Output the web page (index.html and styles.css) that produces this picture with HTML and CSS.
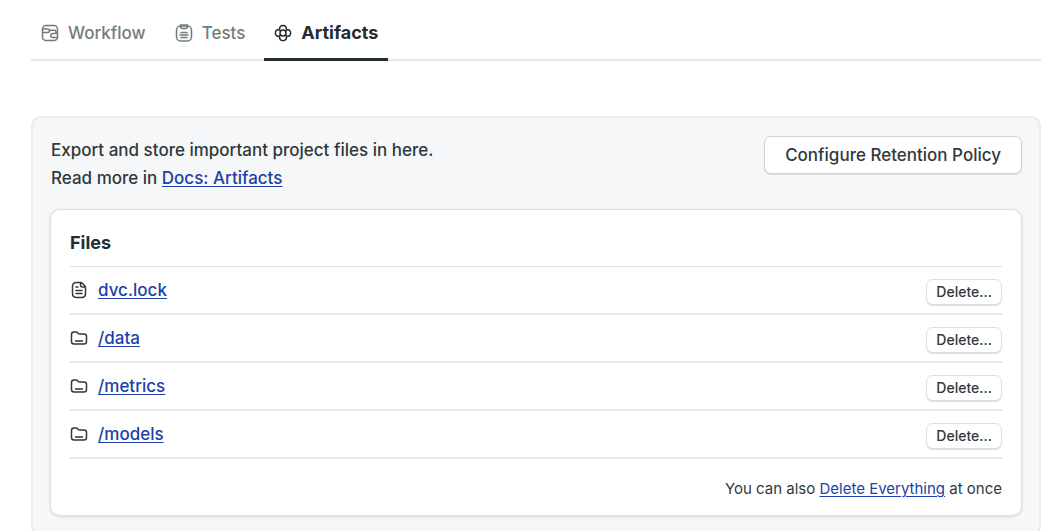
FILE: index.html
```html
<!DOCTYPE html>
<html lang="en">
<head>
<meta charset="utf-8">
<title>Artifacts</title>
<link rel="stylesheet" href="styles.css">
</head>
<body>
<svg class="sprite" aria-hidden="true">
  <symbol id="folder" viewBox="0 0 18 18"><path d="M1.500 12.500v-7q0-2.500 2.500-2.500h2c1.800 0 1.800 2 3.600 2H14q2.500 0 2.500 2.500v5q0 2.500-2.500 2.500H4q-2.500 0-2.500-2.500zM5.500 12h7"/></symbol>
  <symbol id="file" viewBox="0 0 18 18"><path d="M10.500 1.500H6.500Q2.500 1.500 2.500 5.500v7q0 4 4 4h5q4 0 4-4V6.500q0-1-1-2l-2-2q-1-1-2-1zM10.500 1.500v2.500q0 2 2 2h3M6 6h2M6 9.500h6M6 12.500h6"/></symbol>
</svg>
<nav class="tabs">
  <a class="tab" href="#workflow">
    <svg class="icon" viewBox="0 0 18 18" aria-hidden="true"><rect x="1.500" y="1.500" width="15" height="15" rx="3.500"/><path d="M1.500 5H6q2.500 0 2.500 1.800T6 8.600H1.500M8.500 6.300h5q1.500 0 1.500 1.500v1.500M16.500 9.500H12q-2.300 0-2.300 2t2.300 2h4.500"/></svg>
    <span>Workflow</span>
  </a>
  <a class="tab" href="#tests">
    <svg class="icon" viewBox="0 0 18 18" aria-hidden="true"><rect x="1.500" y="2" width="15" height="15" rx="4"/><path d="M5.500 1h7v1q0 2.500-2.500 2.500H8Q5.500 4.500 5.500 2zM6 8.500h6M5 11h8M6 13.500h6"/></svg>
    <span>Tests</span>
  </a>
  <a class="tab active" href="#artifacts" aria-current="page">
    <svg class="icon" viewBox="0 0 18 18" aria-hidden="true"><circle cx="9" cy="9" r="3"/><path d="M5.500 5.500C5.500 0 12.500 0 12.500 5.500C18 5.500 18 12.500 12.500 12.500C12.500 18 5.500 18 5.500 12.500C0 12.500 0 5.500 5.500 5.500zM5.500 5.500q0 1 1.200 1.500M12.500 5.500q0 1-1.200 1.500M12.500 12.500q0-1-1.200-1.500M5.500 12.500q0-1 1.200-1.500"/></svg>
    <span>Artifacts</span>
  </a>
</nav>
<main class="panel">
  <header class="intro">
    <p class="lead">Export and store important project files in here.<br>Read more in <a href="#docs">Docs: Artifacts</a></p>
    <button class="button" type="button">Configure Retention Policy</button>
  </header>
  <section class="card">
    <h2 class="title">Files</h2>
    <ul class="files">
      <li class="row"><svg class="icon" aria-hidden="true"><use href="#file"/></svg><a class="name" href="#lock">dvc.lock</a><button class="button small" type="button">Delete...</button></li>
      <li class="row"><svg class="icon" aria-hidden="true"><use href="#folder"/></svg><a class="name" href="#data">/data</a><button class="button small" type="button">Delete...</button></li>
      <li class="row"><svg class="icon" aria-hidden="true"><use href="#folder"/></svg><a class="name" href="#metrics">/metrics</a><button class="button small" type="button">Delete...</button></li>
      <li class="row"><svg class="icon" aria-hidden="true"><use href="#folder"/></svg><a class="name" href="#models">/models</a><button class="button small" type="button">Delete...</button></li>
    </ul>
    <p class="note">You can also <a href="#all">Delete Everything</a> at once</p>
  </section>
</main>
</body>
</html>
```
FILE: styles.css
```css
* { box-sizing: border-box; }
body {
  margin: 0;
  padding: 8px 15px 0 31px;
  background: #fff;
  color: #30393c;
  font-family: Inter, "Liberation Sans", sans-serif;
  font-size: 17px;
  font-weight: 500;
  line-height: 28px;
}
p, h2, ul { margin: 0; padding: 0; }
a { color: #213fa8; text-decoration-thickness: 1px; text-underline-offset: 2px; }
.sprite { display: none; }
.icon {
  width: 18px;
  height: 18px;
  flex: none;
  fill: none;
  stroke: currentColor;
  stroke-width: 1.5;
  stroke-linecap: round;
  stroke-linejoin: round;
}
.tabs {
  display: flex;
  gap: 9px;
  height: 53px;
  border-bottom: 2px solid #e4e8eb;
}
.tab {
  display: flex;
  align-items: center;
  gap: 9px;
  height: 53px;
  padding: 0 10px;
  border-bottom: 3px solid transparent;
  color: #727c80;
  text-decoration: none;
}
.tab.active { border-bottom-color: #232d30; color: #232d30; font-size: 18px; font-weight: 700; }
.panel {
  margin-top: 55px;
  padding: 18px 17px;
  border: 2px solid #e9ecee;
  border-radius: 10px;
  background: #f6f7f9;
}
.intro {
  display: flex;
  justify-content: space-between;
  align-items: flex-start;
  margin-bottom: 17px;
}
.lead { padding-left: 1px; }
.button {
  height: 38px;
  padding: 0 20px;
  border: 1px solid #cfd3d6;
  border-radius: 7px;
  background: #fff;
  box-shadow: 0 1px 1px #d9dcdf;
  color: #30393c;
  font: 500 17px/24px Inter, "Liberation Sans", sans-serif;
}
.button.small {
  height: 26px;
  margin-top: 4px;
  padding: 0 9px;
  border-color: #dde0e2;
  font-size: 14px;
  line-height: 20px;
}
.card {
  padding: 19px 19px 12px;
  border: 1px solid #dfe2e5;
  border-radius: 10px;
  background: #fff;
  box-shadow: 0 1px 3px #d3d7da;
}
.title { margin-bottom: 9px; color: #232d30; font-size: 18px; font-weight: 700; }
.files { list-style: none; border-top: 1px solid #dde1e4; }
.row {
  display: flex;
  align-items: center;
  gap: 10px;
  height: 48px;
  border-bottom: 2px solid #e4e8eb;
}
.name { flex: 1; }
.note { margin-top: 16px; font-size: 15px; font-weight: 400; text-align: right; }
```
